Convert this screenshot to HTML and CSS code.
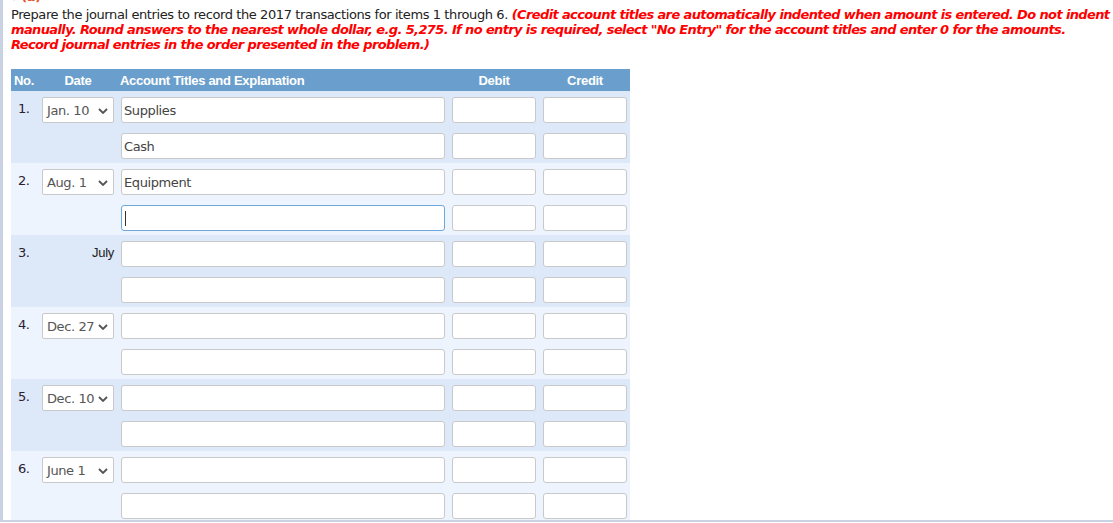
FILE: index.html
```html
<!DOCTYPE html>
<html>
<head>
<meta charset="utf-8">
<link rel="stylesheet" href="styles.css">
</head>
<body>
<div class="page">
  <div class="part">&#9662; (a)</div>
  <p class="instr">Prepare the journal entries to record the 2017 transactions for items 1 through 6. <em class="note">(Credit account titles are automatically indented when amount is entered. Do not indent<br>manually. Round answers to the nearest whole dollar, e.g. 5,275. If no entry is required, select "No Entry" for the account titles and enter 0 for the amounts.<br>Record journal entries in the order presented in the problem.)</em></p>

  <div class="journal">
    <div class="jrow head">
      <div class="h-no">No.</div>
      <div class="h-date">Date</div>
      <div class="h-acct">Account Titles and Explanation</div>
      <div class="h-amt">Debit</div>
      <div class="h-amt">Credit</div>
    </div>

    <div class="group odd">
      <div class="jrow">
        <div class="num">1.</div>
        <div class="select"><span>Jan. 10</span><svg class="chev" viewBox="0 0 10 6" width="10" height="6"><path d="M1 1 L5 5 L9 1" fill="none" stroke="#555" stroke-width="1.8"/></svg></div>
        <input class="field" value="Supplies">
        <input class="field">
        <input class="field">
      </div>
      <div class="jrow">
        <div class="num"></div>
        <div></div>
        <input class="field" value="Cash">
        <input class="field">
        <input class="field">
      </div>
    </div>

    <div class="group even">
      <div class="jrow">
        <div class="num">2.</div>
        <div class="select"><span>Aug. 1</span><svg class="chev" viewBox="0 0 10 6" width="10" height="6"><path d="M1 1 L5 5 L9 1" fill="none" stroke="#555" stroke-width="1.8"/></svg></div>
        <input class="field" value="Equipment">
        <input class="field">
        <input class="field">
      </div>
      <div class="jrow">
        <div class="num"></div>
        <div></div>
        <div class="field focus"><span class="caret"></span></div>
        <input class="field">
        <input class="field">
      </div>
    </div>

    <div class="group odd">
      <div class="jrow">
        <div class="num">3.</div>
        <div class="plain-date">July</div>
        <input class="field">
        <input class="field">
        <input class="field">
      </div>
      <div class="jrow">
        <div class="num"></div>
        <div></div>
        <input class="field">
        <input class="field">
        <input class="field">
      </div>
    </div>

    <div class="group even">
      <div class="jrow">
        <div class="num">4.</div>
        <div class="select"><span>Dec. 27</span><svg class="chev" viewBox="0 0 10 6" width="10" height="6"><path d="M1 1 L5 5 L9 1" fill="none" stroke="#555" stroke-width="1.8"/></svg></div>
        <input class="field">
        <input class="field">
        <input class="field">
      </div>
      <div class="jrow">
        <div class="num"></div>
        <div></div>
        <input class="field">
        <input class="field">
        <input class="field">
      </div>
    </div>

    <div class="group odd">
      <div class="jrow">
        <div class="num">5.</div>
        <div class="select"><span>Dec. 10</span><svg class="chev" viewBox="0 0 10 6" width="10" height="6"><path d="M1 1 L5 5 L9 1" fill="none" stroke="#555" stroke-width="1.8"/></svg></div>
        <input class="field">
        <input class="field">
        <input class="field">
      </div>
      <div class="jrow">
        <div class="num"></div>
        <div></div>
        <input class="field">
        <input class="field">
        <input class="field">
      </div>
    </div>

    <div class="group even">
      <div class="jrow">
        <div class="num">6.</div>
        <div class="select"><span>June 1</span><svg class="chev" viewBox="0 0 10 6" width="10" height="6"><path d="M1 1 L5 5 L9 1" fill="none" stroke="#555" stroke-width="1.8"/></svg></div>
        <input class="field">
        <input class="field">
        <input class="field">
      </div>
      <div class="jrow">
        <div class="num"></div>
        <div></div>
        <input class="field">
        <input class="field">
        <input class="field">
      </div>
    </div>
  </div>
</div>
</body>
</html>
```
FILE: styles.css
```css
html, body {
  margin: 0;
  padding: 0;
  background: #fff;
  overflow: hidden;
}
body {
  font-family: "DejaVu Sans", Verdana, sans-serif;
  font-size: 13px;
  letter-spacing: -0.4px;
  color: #333;
}
.page {
  height: 520px;
  border-left: 3px solid #c9d2e2;
  border-bottom: 2px solid #c9d2e2;
  padding-left: 8px;
  overflow: hidden;
}
.part {
  margin-top: -11px;
  height: 15px;
  line-height: 15px;
  color: #e8502a;
  font-weight: bold;
}
.instr {
  margin: 0;
  margin-top: 3px;
  line-height: 15px;
  white-space: nowrap;
  color: #222;
}
.note {
  color: #ff0000;
  font-weight: bold;
  font-style: italic;
  letter-spacing: -0.62px;
}
.journal {
  margin-top: 17px;
  width: 619px;
}
.jrow {
  display: grid;
  grid-template-columns: 24px 72px 324px 84px 84px;
  column-gap: 7px;
  padding-right: 3px;
  height: 36px;
  box-sizing: border-box;
  padding-top: 6px;
  align-items: start;
}
.jrow.head {
  height: 22px;
  padding-top: 0;
  align-items: center;
  background: #6a9fcd;
  color: #fff;
  font-family: "Liberation Sans", Arial, sans-serif;
  font-weight: bold;
  font-size: 13px;
  letter-spacing: -0.3px;
}
.h-no { padding-left: 3px; }
.h-date { text-align: center; }
.h-acct { margin-left: -1px; }
.h-amt { text-align: center; }
.group.odd { background: #dde8f8; }
.group.even { background: #edf4fe; }
.num {
  padding-left: 7px;
  padding-top: 4px;
  line-height: 15px;
  color: #2a2030;
}
.select {
  height: 26px;
  box-sizing: border-box;
  border: 1px solid #c9c9c9;
  border-radius: 2px;
  background: #fff;
  display: flex;
  align-items: center;
  justify-content: space-between;
  padding: 0 5px 0 4px;
  color: #555;
}
.chev { flex: none; margin-top: 1px; }
.plain-date {
  text-align: right;
  padding-top: 4px;
  line-height: 15px;
  font-family: "Liberation Sans", Arial, sans-serif;
  letter-spacing: -0.3px;
  color: #222;
}
.field {
  height: 26px;
  box-sizing: border-box;
  border: 1px solid #c9c9c9;
  border-radius: 3px;
  background: #fff;
  padding: 0 2px;
  margin: 0;
  font-family: "DejaVu Sans", Verdana, sans-serif;
  font-size: 13px;
  letter-spacing: -0.4px;
  color: #444;
  width: 100%;
  outline: none;
}
.field.focus {
  border-color: #6fa8dc;
  display: flex;
  align-items: center;
}
.caret {
  display: inline-block;
  width: 1px;
  height: 15px;
  background: #333;
  margin-left: 1px;
}
```
